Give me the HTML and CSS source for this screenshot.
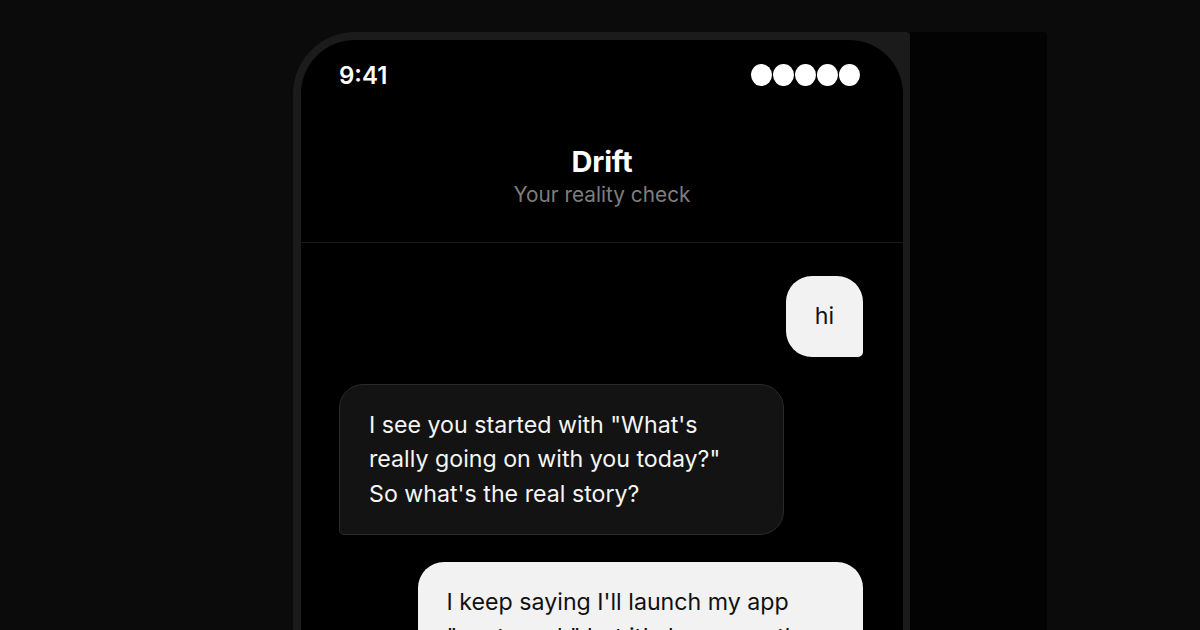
FILE: index.html
```html
<!DOCTYPE html>
<html lang="en">
<head>
<meta charset="utf-8">
<title>Drift</title>
<link rel="stylesheet" href="styles.css">
</head>
<body>
<div class="stage">
  <div class="phone">
    <div class="screen">
      <div class="status">
        <span class="time">9:41</span>
        <span class="dots"><i></i><i></i><i></i><i></i><i></i></span>
      </div>
      <header class="header">
        <div class="title">Drift</div>
        <div class="subtitle">Your reality check</div>
      </header>
      <div class="messages">
        <div class="bubble user">hi</div>
        <div class="bubble ai">I see you started with "What's really going on with you today?" So what's the real story?</div>
        <div class="bubble user">I keep saying I'll launch my app "next week" but it's been months</div>
      </div>
    </div>
  </div>
</div>
</body>
</html>
```

FILE: styles.css
```css
html, body {
  margin: 0;
  padding: 0;
  height: 100%;
  overflow: hidden;
  background: #0b0b0b;
  font-family: "Inter", "Noto Sans", "Liberation Sans", sans-serif;
}

.stage {
  display: flex;
  justify-content: center;
  padding: 32px 0 0 3px;
  height: 630px;
  box-sizing: border-box;
}

.phone {
  width: 617px;
  height: 700px;
  box-sizing: border-box;
  padding: 8px 7px 0 8px;
  background: #1b1b1b;
  border-radius: 62px 4px 0 0;
  box-shadow: 137px 0 0 #030303;
}

.screen {
  height: 100%;
  background: #000;
  border-radius: 54px 54px 0 0;
  display: flex;
  flex-direction: column;
}

.status {
  height: 70px;
  display: flex;
  align-items: center;
  justify-content: space-between;
  padding: 0 43px 0 38px;
  color: #fff;
}

.time {
  font-size: 24px;
  font-weight: 600;
  letter-spacing: 0;
}

.dots {
  display: flex;
  gap: 1px;
}

.dots i {
  display: block;
  width: 21px;
  height: 22px;
  border-radius: 50%;
  background: #fff;
}

.header {
  padding: 35px 0 34px;
  text-align: center;
  border-bottom: 1px solid #1a1a1a;
}

.title {
  color: #fff;
  font-size: 29px;
  font-weight: 700;
  line-height: 34px;
  letter-spacing: -0.2px;
}

.subtitle {
  margin-top: 3px;
  color: #7e7e7e;
  font-size: 20.8px;
  line-height: 26px;
}

.messages {
  padding: 33px 40px 0 38px;
  display: flex;
  flex-direction: column;
  gap: 27px;
}

.bubble {
  max-width: 85%;
  box-sizing: border-box;
  padding: 23px 29px;
  font-size: 23.2px;
  line-height: 34.5px;
}

.bubble.user {
  align-self: flex-end;
  background: #f2f2f2;
  color: #111;
  border-radius: 26px 26px 5px 26px;
}

.bubble.ai {
  align-self: flex-start;
  background: #131313;
  color: #f5f5f5;
  border: 1px solid #2a2a2a;
  border-radius: 24px 24px 24px 5px;
}
```
